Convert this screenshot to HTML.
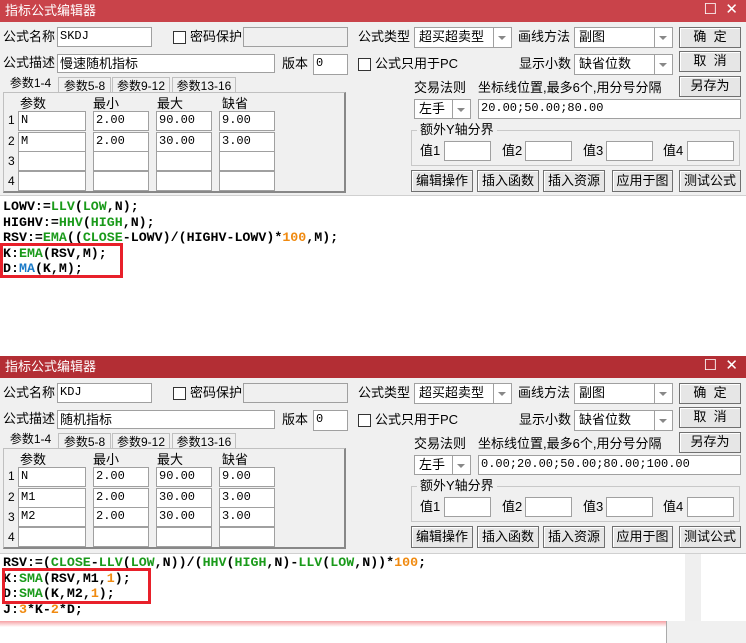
<!DOCTYPE html>
<html><head><meta charset="utf-8"><style>
*{box-sizing:border-box;margin:0;padding:0}
body{width:746px;height:643px;overflow:hidden;background:#f0f0f0;font-family:"Liberation Sans","Noto Sans CJK SC",sans-serif;font-size:12px;color:#000;position:relative}
.win{position:absolute;left:0;width:746px;height:356px;background:#f0f0f0;overflow:hidden}
.win div,.win i{position:absolute}
.win span{position:static}
.tb{left:0;top:0;width:746px;height:22px;color:#fff;font-size:13px;line-height:22px;padding-left:5px}
.l{white-space:nowrap;line-height:14px}
.in{background:#fff;border:1px solid #a0a0a0;font-family:"Liberation Mono","Noto Sans CJK SC",monospace;font-size:12px;padding-left:2px;line-height:17px;white-space:nowrap}
.dis{background:#f0f0f0}
.cb{width:13px;height:13px;border:1px solid #333;background:#fff}
.sel{background:#fff;border:1px solid #a0a0a0;padding-left:4px;line-height:18px;font-size:13px}
.sel::after{content:"";position:absolute;right:0;top:0;width:17px;height:100%;border-left:1px solid #a0a0a0;background:#fff}
.sel i{right:5px;top:8px;width:0;height:0;border-left:4px solid transparent;border-right:4px solid transparent;border-top:4px solid #888;z-index:2}
.bt{background:#e6e6e6;border:1px solid #707070;text-align:center;font-size:13px;line-height:18px;box-shadow:inset 1px 1px #fff}
.tab{border:1px solid #c0c0c0;border-bottom:none;background:#f0f0f0;font-size:12px;line-height:16px;text-align:center}
.ed{left:0;top:195px;width:746px;height:161px;background:#fff;border-top:1px solid #d0d0d0}
.code{font-family:"Liberation Mono",monospace;font-weight:bold;font-size:13.3px;line-height:15.5px;white-space:pre;left:3px}
.g{color:#1a9a1a}.o{color:#f08a10}.b{color:#1a7ac8}
.rb{border:3px solid #e8202a}
</style></head><body>

<!-- window 1 -->
<div class="win" style="top:0">
<div class="tb" style="background:#c9434a">指标公式编辑器</div>
<div class="l" style="right:8px;top:3px;color:#fff;font-size:15px">☐&nbsp;&nbsp;✕</div>
<div class="l" style="left:3px;top:30px;font-size:13px">公式名称</div>
<div class="in" style="left:57px;top:27px;width:95px;height:20px">SKDJ</div>
<div class="cb" style="left:173px;top:31px"></div>
<div class="l" style="left:190px;top:30px;font-size:13px">密码保护</div>
<div class="in dis" style="left:243px;top:27px;width:105px;height:20px"></div>
<div class="l" style="left:358px;top:30px;font-size:13px">公式类型</div>
<div class="sel" style="left:414px;top:27px;width:98px;height:21px">超买超卖型<i></i></div>
<div class="l" style="left:518px;top:30px;font-size:13px">画线方法</div>
<div class="sel" style="left:574px;top:27px;width:99px;height:21px">副图<i></i></div>
<div class="bt" style="left:679px;top:27px;width:62px;height:21px">确&nbsp;&nbsp;定</div>
<div class="l" style="left:3px;top:56px;font-size:13px">公式描述</div>
<div class="in" style="left:57px;top:54px;width:218px;height:19px;font-family:'Liberation Sans','Noto Sans CJK SC',sans-serif;font-size:13px">慢速随机指标</div>
<div class="l" style="left:282px;top:57px;font-size:13px">版本</div>
<div class="in" style="left:313px;top:54px;width:35px;height:21px">0</div>
<div class="cb" style="left:358px;top:58px"></div>
<div class="l" style="left:375px;top:57px;font-size:13px">公式只用于PC</div>
<div class="l" style="left:519px;top:57px;font-size:13px">显示小数</div>
<div class="sel" style="left:574px;top:54px;width:99px;height:21px">缺省位数<i></i></div>
<div class="bt" style="left:679px;top:51px;width:62px;height:21px">取&nbsp;&nbsp;消</div>
<div class="tab" style="left:4px;top:75px;width:53px;height:18px;border:none">参数1-4</div>
<div class="tab" style="left:58px;top:77px;width:53px;height:16px">参数5-8</div>
<div class="tab" style="left:112px;top:77px;width:58px;height:16px">参数9-12</div>
<div class="tab" style="left:172px;top:77px;width:64px;height:16px">参数13-16</div>
<div style="left:3px;top:92px;width:343px;height:101px;border:1px solid #c0c0c0;border-right:2px solid #888;border-bottom:2px solid #888"></div>
<div class="l" style="left:20px;top:97px;font-size:13px">参数</div>
<div class="l" style="left:93px;top:97px;font-size:13px">最小</div>
<div class="l" style="left:157px;top:97px;font-size:13px">最大</div>
<div class="l" style="left:222px;top:97px;font-size:13px">缺省</div>
<div class="l" style="left:8px;top:113px">1</div><div class="l" style="left:8px;top:134px">2</div><div class="l" style="left:8px;top:154px">3</div><div class="l" style="left:8px;top:174px">4</div>
<div class="in" style="left:18px;top:111px;width:68px;height:20px">N</div>
<div class="in" style="left:93px;top:111px;width:56px;height:20px">2.00</div>
<div class="in" style="left:156px;top:111px;width:56px;height:20px">90.00</div>
<div class="in" style="left:219px;top:111px;width:56px;height:20px">9.00</div>
<div class="in" style="left:18px;top:132px;width:68px;height:20px">M</div>
<div class="in" style="left:93px;top:132px;width:56px;height:20px">2.00</div>
<div class="in" style="left:156px;top:132px;width:56px;height:20px">30.00</div>
<div class="in" style="left:219px;top:132px;width:56px;height:20px">3.00</div>
<div class="in" style="left:18px;top:151px;width:68px;height:20px"></div>
<div class="in" style="left:93px;top:151px;width:56px;height:20px"></div>
<div class="in" style="left:156px;top:151px;width:56px;height:20px"></div>
<div class="in" style="left:219px;top:151px;width:56px;height:20px"></div>
<div class="in" style="left:18px;top:171px;width:68px;height:20px"></div>
<div class="in" style="left:93px;top:171px;width:56px;height:20px"></div>
<div class="in" style="left:156px;top:171px;width:56px;height:20px"></div>
<div class="in" style="left:219px;top:171px;width:56px;height:20px"></div>
<div class="l" style="left:414px;top:81px;font-size:13px">交易法则</div>
<div class="l" style="left:478px;top:81px;font-size:13px">坐标线位置,最多6个,用分号分隔</div>
<div class="bt" style="left:679px;top:76px;width:62px;height:21px">另存为</div>
<div class="sel" style="left:414px;top:99px;width:57px;height:20px">左手<i></i></div>
<div class="in" style="left:478px;top:99px;width:263px;height:20px">20.00;50.00;80.00</div>
<div style="left:411px;top:130px;width:329px;height:36px;border:1px solid #c8c8c8"></div>
<div class="l" style="left:417px;top:123px;font-size:13px;background:#f0f0f0;padding:0 3px">额外Y轴分界</div>
<div class="l" style="left:420px;top:144px;font-size:13px">值1</div>
<div class="in" style="left:444px;top:141px;width:47px;height:20px"></div>
<div class="l" style="left:502px;top:144px;font-size:13px">值2</div>
<div class="in" style="left:525px;top:141px;width:47px;height:20px"></div>
<div class="l" style="left:583px;top:144px;font-size:13px">值3</div>
<div class="in" style="left:606px;top:141px;width:47px;height:20px"></div>
<div class="l" style="left:663px;top:144px;font-size:13px">值4</div>
<div class="in" style="left:687px;top:141px;width:47px;height:20px"></div>
<div class="bt" style="left:411px;top:170px;width:62px;height:22px;line-height:20px">编辑操作</div>
<div class="bt" style="left:477px;top:170px;width:62px;height:22px;line-height:20px">插入函数</div>
<div class="bt" style="left:543px;top:170px;width:62px;height:22px;line-height:20px">插入资源</div>
<div class="bt" style="left:612px;top:170px;width:61px;height:22px;line-height:20px">应用于图</div>
<div class="bt" style="left:679px;top:170px;width:62px;height:22px;line-height:20px">测试公式</div>
<div class="ed">
<div class="code" style="top:3px">LOWV:=<span class="g">LLV</span>(<span class="g">LOW</span>,N);
HIGHV:=<span class="g">HHV</span>(<span class="g">HIGH</span>,N);
RSV:=<span class="g">EMA</span>((<span class="g">CLOSE</span>-LOWV)/(HIGHV-LOWV)*<span class="o">100</span>,M);
K:<span class="g">EMA</span>(RSV,M);
D:<span class="b">MA</span>(K,M);</div>
<div class="rb" style="left:0;top:47px;width:123px;height:35px"></div>
</div>
</div>

<!-- window 2 -->
<div class="win" style="top:356px;height:287px">
<div class="tb" style="background:#b32e34">指标公式编辑器</div>
<div class="l" style="right:8px;top:3px;color:#fff;font-size:15px">☐&nbsp;&nbsp;✕</div>
<div class="l" style="left:3px;top:30px;font-size:13px">公式名称</div>
<div class="in" style="left:57px;top:27px;width:95px;height:20px">KDJ</div>
<div class="cb" style="left:173px;top:31px"></div>
<div class="l" style="left:190px;top:30px;font-size:13px">密码保护</div>
<div class="in dis" style="left:243px;top:27px;width:105px;height:20px"></div>
<div class="l" style="left:358px;top:30px;font-size:13px">公式类型</div>
<div class="sel" style="left:414px;top:27px;width:98px;height:21px">超买超卖型<i></i></div>
<div class="l" style="left:518px;top:30px;font-size:13px">画线方法</div>
<div class="sel" style="left:574px;top:27px;width:99px;height:21px">副图<i></i></div>
<div class="bt" style="left:679px;top:27px;width:62px;height:21px">确&nbsp;&nbsp;定</div>
<div class="l" style="left:3px;top:56px;font-size:13px">公式描述</div>
<div class="in" style="left:57px;top:54px;width:218px;height:19px;font-family:'Liberation Sans','Noto Sans CJK SC',sans-serif;font-size:13px">随机指标</div>
<div class="l" style="left:282px;top:57px;font-size:13px">版本</div>
<div class="in" style="left:313px;top:54px;width:35px;height:21px">0</div>
<div class="cb" style="left:358px;top:58px"></div>
<div class="l" style="left:375px;top:57px;font-size:13px">公式只用于PC</div>
<div class="l" style="left:519px;top:57px;font-size:13px">显示小数</div>
<div class="sel" style="left:574px;top:54px;width:99px;height:21px">缺省位数<i></i></div>
<div class="bt" style="left:679px;top:51px;width:62px;height:21px">取&nbsp;&nbsp;消</div>
<div class="tab" style="left:4px;top:75px;width:53px;height:18px;border:none">参数1-4</div>
<div class="tab" style="left:58px;top:77px;width:53px;height:16px">参数5-8</div>
<div class="tab" style="left:112px;top:77px;width:58px;height:16px">参数9-12</div>
<div class="tab" style="left:172px;top:77px;width:64px;height:16px">参数13-16</div>
<div style="left:3px;top:92px;width:343px;height:101px;border:1px solid #c0c0c0;border-right:2px solid #888;border-bottom:2px solid #888"></div>
<div class="l" style="left:20px;top:97px;font-size:13px">参数</div>
<div class="l" style="left:93px;top:97px;font-size:13px">最小</div>
<div class="l" style="left:157px;top:97px;font-size:13px">最大</div>
<div class="l" style="left:222px;top:97px;font-size:13px">缺省</div>
<div class="l" style="left:8px;top:113px">1</div><div class="l" style="left:8px;top:134px">2</div><div class="l" style="left:8px;top:154px">3</div><div class="l" style="left:8px;top:174px">4</div>
<div class="in" style="left:18px;top:111px;width:68px;height:20px">N</div>
<div class="in" style="left:93px;top:111px;width:56px;height:20px">2.00</div>
<div class="in" style="left:156px;top:111px;width:56px;height:20px">90.00</div>
<div class="in" style="left:219px;top:111px;width:56px;height:20px">9.00</div>
<div class="in" style="left:18px;top:132px;width:68px;height:20px">M1</div>
<div class="in" style="left:93px;top:132px;width:56px;height:20px">2.00</div>
<div class="in" style="left:156px;top:132px;width:56px;height:20px">30.00</div>
<div class="in" style="left:219px;top:132px;width:56px;height:20px">3.00</div>
<div class="in" style="left:18px;top:151px;width:68px;height:20px">M2</div>
<div class="in" style="left:93px;top:151px;width:56px;height:20px">2.00</div>
<div class="in" style="left:156px;top:151px;width:56px;height:20px">30.00</div>
<div class="in" style="left:219px;top:151px;width:56px;height:20px">3.00</div>
<div class="in" style="left:18px;top:171px;width:68px;height:20px"></div>
<div class="in" style="left:93px;top:171px;width:56px;height:20px"></div>
<div class="in" style="left:156px;top:171px;width:56px;height:20px"></div>
<div class="in" style="left:219px;top:171px;width:56px;height:20px"></div>
<div class="l" style="left:414px;top:81px;font-size:13px">交易法则</div>
<div class="l" style="left:478px;top:81px;font-size:13px">坐标线位置,最多6个,用分号分隔</div>
<div class="bt" style="left:679px;top:76px;width:62px;height:21px">另存为</div>
<div class="sel" style="left:414px;top:99px;width:57px;height:20px">左手<i></i></div>
<div class="in" style="left:478px;top:99px;width:263px;height:20px">0.00;20.00;50.00;80.00;100.00</div>
<div style="left:411px;top:130px;width:329px;height:36px;border:1px solid #c8c8c8"></div>
<div class="l" style="left:417px;top:123px;font-size:13px;background:#f0f0f0;padding:0 3px">额外Y轴分界</div>
<div class="l" style="left:420px;top:144px;font-size:13px">值1</div>
<div class="in" style="left:444px;top:141px;width:47px;height:20px"></div>
<div class="l" style="left:502px;top:144px;font-size:13px">值2</div>
<div class="in" style="left:525px;top:141px;width:47px;height:20px"></div>
<div class="l" style="left:583px;top:144px;font-size:13px">值3</div>
<div class="in" style="left:606px;top:141px;width:47px;height:20px"></div>
<div class="l" style="left:663px;top:144px;font-size:13px">值4</div>
<div class="in" style="left:687px;top:141px;width:47px;height:20px"></div>
<div class="bt" style="left:411px;top:170px;width:62px;height:22px;line-height:20px">编辑操作</div>
<div class="bt" style="left:477px;top:170px;width:62px;height:22px;line-height:20px">插入函数</div>
<div class="bt" style="left:543px;top:170px;width:62px;height:22px;line-height:20px">插入资源</div>
<div class="bt" style="left:612px;top:170px;width:61px;height:22px;line-height:20px">应用于图</div>
<div class="bt" style="left:679px;top:170px;width:62px;height:22px;line-height:20px">测试公式</div>
<div class="ed" style="top:197px;height:90px">
<div class="code" style="top:1px">RSV:=(<span class="g">CLOSE</span>-<span class="g">LLV</span>(<span class="g">LOW</span>,N))/(<span class="g">HHV</span>(<span class="g">HIGH</span>,N)-<span class="g">LLV</span>(<span class="g">LOW</span>,N))*<span class="o">100</span>;
K:<span class="g">SMA</span>(RSV,M1,<span class="o">1</span>);
D:<span class="g">SMA</span>(K,M2,<span class="o">1</span>);
J:<span class="o">3</span>*K-<span class="o">2</span>*D;</div>
<div class="rb" style="left:2px;top:14px;width:149px;height:36px"></div>
<div style="left:685px;top:0;width:16px;height:69px;background:#efefef"></div>
<div style="left:0;top:67px;width:746px;height:6px;background:linear-gradient(#f6a0a4,#fff)"></div>
<div style="left:666px;top:67px;width:80px;height:23px;background:#f0f0f0;border-left:1px solid #aaa"></div>
</div>
</div>
</body></html>
